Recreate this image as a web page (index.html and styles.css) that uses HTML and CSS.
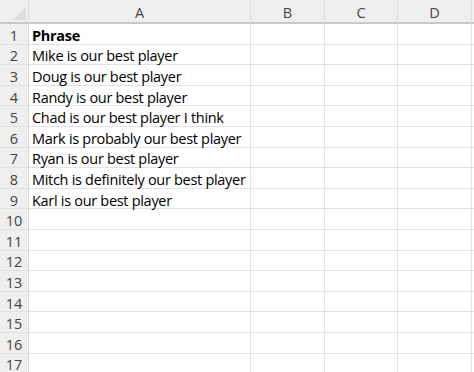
FILE: index.html
```html
<!DOCTYPE html>
<html>
<head>
<meta charset="utf-8">
<link rel="stylesheet" href="styles.css">
</head>
<body>
<div class="sheet">
  <div class="corner"><span class="tri"></span></div>
  <div class="colh">A</div>
  <div class="colh">B</div>
  <div class="colh">C</div>
  <div class="colh">D</div>
  <div class="colh edge"></div>

  <div class="rowh">1</div><div class="cell bold">Phrase</div><div class="cell"></div><div class="cell"></div><div class="cell"></div><div class="cell edge"></div>
  <div class="rowh">2</div><div class="cell">Mike is our best player</div><div class="cell"></div><div class="cell"></div><div class="cell"></div><div class="cell edge"></div>
  <div class="rowh">3</div><div class="cell">Doug is our best player</div><div class="cell"></div><div class="cell"></div><div class="cell"></div><div class="cell edge"></div>
  <div class="rowh">4</div><div class="cell">Randy is our best player</div><div class="cell"></div><div class="cell"></div><div class="cell"></div><div class="cell edge"></div>
  <div class="rowh">5</div><div class="cell">Chad is our best player I think</div><div class="cell"></div><div class="cell"></div><div class="cell"></div><div class="cell edge"></div>
  <div class="rowh">6</div><div class="cell">Mark is probably our best player</div><div class="cell"></div><div class="cell"></div><div class="cell"></div><div class="cell edge"></div>
  <div class="rowh">7</div><div class="cell">Ryan is our best player</div><div class="cell"></div><div class="cell"></div><div class="cell"></div><div class="cell edge"></div>
  <div class="rowh">8</div><div class="cell">Mitch is definitely our best player</div><div class="cell"></div><div class="cell"></div><div class="cell"></div><div class="cell edge"></div>
  <div class="rowh">9</div><div class="cell">Karl is our best player</div><div class="cell"></div><div class="cell"></div><div class="cell"></div><div class="cell edge"></div>
  <div class="rowh">10</div><div class="cell"></div><div class="cell"></div><div class="cell"></div><div class="cell"></div><div class="cell edge"></div>
  <div class="rowh">11</div><div class="cell"></div><div class="cell"></div><div class="cell"></div><div class="cell"></div><div class="cell edge"></div>
  <div class="rowh">12</div><div class="cell"></div><div class="cell"></div><div class="cell"></div><div class="cell"></div><div class="cell edge"></div>
  <div class="rowh">13</div><div class="cell"></div><div class="cell"></div><div class="cell"></div><div class="cell"></div><div class="cell edge"></div>
  <div class="rowh">14</div><div class="cell"></div><div class="cell"></div><div class="cell"></div><div class="cell"></div><div class="cell edge"></div>
  <div class="rowh">15</div><div class="cell"></div><div class="cell"></div><div class="cell"></div><div class="cell"></div><div class="cell edge"></div>
  <div class="rowh">16</div><div class="cell"></div><div class="cell"></div><div class="cell"></div><div class="cell"></div><div class="cell edge"></div>
  <div class="rowh">17</div><div class="cell"></div><div class="cell"></div><div class="cell"></div><div class="cell"></div><div class="cell edge"></div>
</div>
</body>
</html>
```

FILE: styles.css
```css
html, body {
  margin: 0;
  padding: 0;
  background: #ffffff;
}
body {
  width: 474px;
  height: 372px;
  overflow: hidden;
  font-family: "Open Sans", "Noto Sans", sans-serif;
  font-size: 14px;
}
.sheet {
  display: grid;
  grid-template-columns: 29px 222px 74px 73px 74px 2px;
  grid-template-rows: 24px repeat(17, 20.6px);
}
.corner {
  background: #efefef;
  border-right: 1px solid #dadada;
  border-bottom: 2px solid #c9c9c9;
  position: relative;
  box-sizing: border-box;
}
.tri {
  position: absolute;
  right: 2px;
  bottom: 2px;
  width: 0;
  height: 0;
  border-left: 13px solid transparent;
  border-bottom: 13px solid #dcdcdc;
}
.colh {
  background: #efefef;
  border-right: 1px solid #dcdcdc;
  border-bottom: 2px solid #c9c9c9;
  box-sizing: border-box;
  color: #444444;
  display: flex;
  align-items: center;
  justify-content: center;
  font-size: 14.5px;
  padding-top: 2px;
}
.colh.edge {
  border-right: none;
}
.rowh {
  background: #efefef;
  border-right: 1px solid #d8d8d8;
  border-bottom: 1px solid #e2e2e2;
  box-sizing: border-box;
  color: #444444;
  display: flex;
  align-items: center;
  justify-content: center;
  font-size: 14.5px;
  line-height: 15px;
  padding-top: 3px;
}
.cell {
  border-right: 1px solid #e2e2e2;
  border-bottom: 1px solid #e2e2e2;
  box-sizing: border-box;
  color: #000000;
  display: flex;
  align-items: center;
  padding-left: 3px;
  padding-top: 3px;
  white-space: nowrap;
  overflow: visible;
  font-size: 14.5px;
  line-height: 15px;
  letter-spacing: -0.3px;
}
.cell.edge {
  border-right: none;
  padding: 0;
}
.bold {
  font-weight: 700;
}
```
